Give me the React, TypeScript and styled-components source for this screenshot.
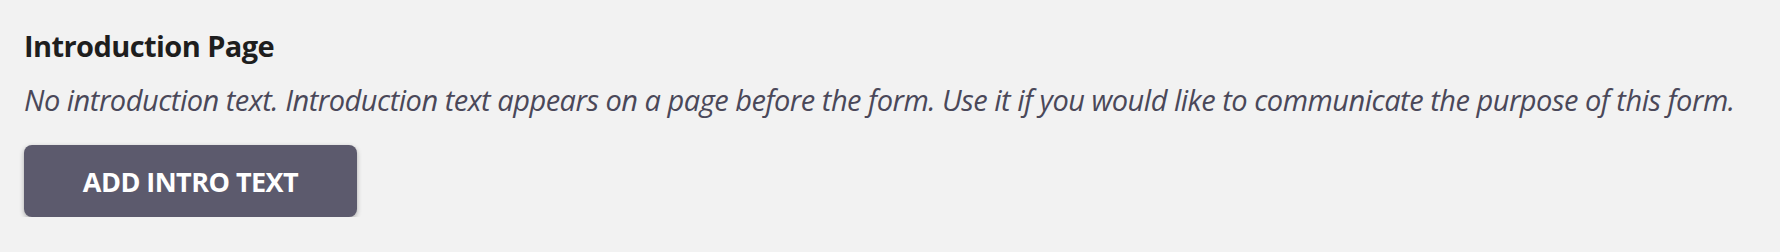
import styled, { createGlobalStyle } from "styled-components"

const GlobalStyle = createGlobalStyle`
    html, body {
        margin: 0;
        padding: 0;
        background: #f2f2f2;
    }
    body {
        font-family: "Open Sans", "Noto Sans", sans-serif;
    }
`

export default function App() {
    return (
        <>
            <GlobalStyle />
            <Section aria-label="Introduction page settings">
                <Title>Introduction Page</Title>
                <Hint>
                    No introduction text. Introduction text appears on a page before the form. Use it if you would like to communicate the purpose of this form.
                </Hint>
                <AddButton type="button">Add intro text</AddButton>
            </Section>
        </>
    )
}

const Section = styled.section`
    display: flex;
    flex-direction: column;
    align-items: flex-start;
    padding: 27px 24px 0;
`

const Title = styled.h2`
    margin: 0;
    font-family: "Open Sans", sans-serif;
    font-size: 29px;
    line-height: 38px;
    font-weight: 700;
    letter-spacing: -0.02em;
    color: #1e1e1e;
`

const Hint = styled.p`
    margin: 16px 0 0;
    font-family: "Open Sans", sans-serif;
    font-style: italic;
    font-size: 29px;
    line-height: 38px;
    letter-spacing: -0.017em;
    white-space: nowrap;
    color: #4a4859;
`

const AddButton = styled.button`
    margin-top: 26px;
    width: 333px;
    height: 72px;
    border: none;
    border-radius: 8px;
    background: #5c5a6d;
    color: #ffffff;
    font-family: "Open Sans", sans-serif;
    font-size: 27px;
    font-weight: 700;
    text-transform: uppercase;
    letter-spacing: -0.02em;
    box-shadow: 0 2px 5px rgba(0, 0, 0, 0.3);
    cursor: pointer;
`
